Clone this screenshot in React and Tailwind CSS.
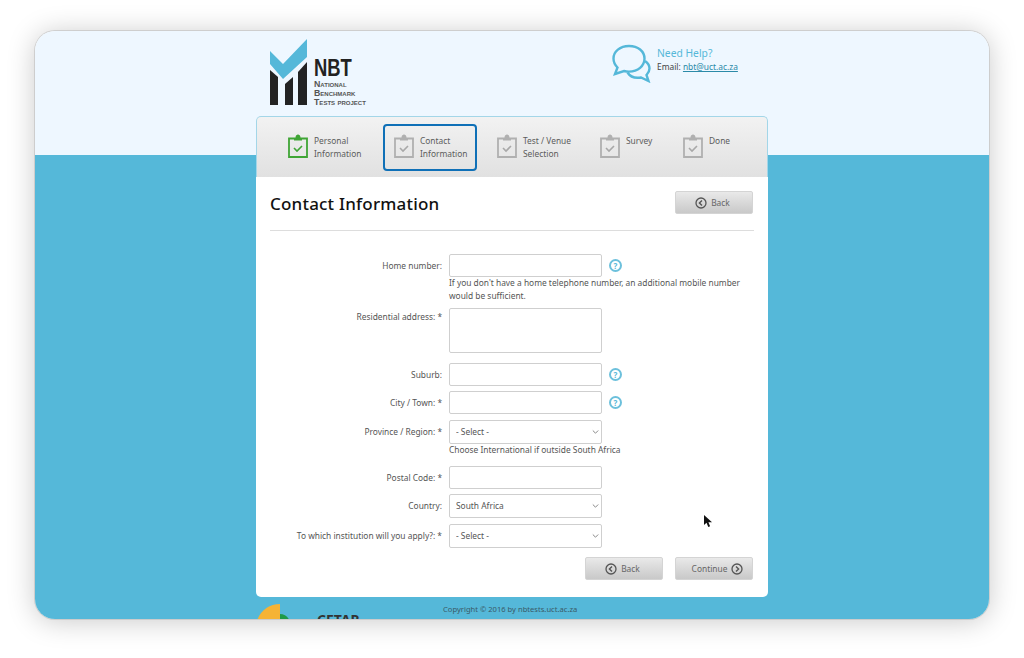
const font = "font-['Noto_Sans','Open_Sans',sans-serif]";

const Clipboard = ({ color = "#b0b0b0", checkColor = "#a8a8a8" }) => (
  <svg width="20" height="24" viewBox="0 0 20 24" fill="none">
    <path d="M6 4.500H1v18.500h18V4.500h-5" stroke={color} strokeWidth="1.800" />
    <path d="M6 6.500V3.500h1.500C7.700 1.500 8.700 .6 10 .6s2.300.9 2.500 2.900H14v3z" fill={color} />
    <path d="M6 14l3 3 5-5" stroke={checkColor} strokeWidth="1.600" />
  </svg>
);

const Step = ({ label, second, done, active, width }) => (
  <div
    className={`flex h-[47px] items-start ${width} ${
      active ? "rounded-[4px] border-2 border-[#0f70b7] pl-[9px] pt-[8px]" : "pl-[10px] pt-[10px]"
    }`}
  >
    {done ? <Clipboard color="#3fa535" checkColor="#3fa535" /> : <Clipboard />}
    <div className="ml-[6px] text-[8.4px] leading-[13px] text-[#5c5c5c]">
      <div>{label}</div>
      {second && <div>{second}</div>}
    </div>
  </div>
);

const Help = () => (
  <span className="ml-[7px] flex h-[13px] w-[13px] items-center justify-center rounded-full border-2 border-[#6cc0dc] text-[8px] font-bold leading-none text-[#55b8d9]">
    ?
  </span>
);

const Row = ({ label, children, className = "", labelClass = "pt-[5px]" }) => (
  <div className={`flex ${className}`}>
    <div className={`w-[172px] text-right text-[8.4px] leading-[13px] text-[#555] ${labelClass}`}>{label}</div>
    <div className="ml-[7px] flex-1">{children}</div>
  </div>
);

const inputCls = "block h-[23px] w-[153px] rounded-[2px] border border-[#cfcfcf] bg-white";

const Select = ({ value }) => (
  <div className="relative h-[24px] w-[153px]">
    <select
      defaultValue={value}
      className={`${font} block h-full w-full appearance-none rounded-[2px] border border-[#cfcfcf] bg-white pl-[6px] text-[8.4px] text-[#555]`}
    >
      <option>{value}</option>
    </select>
    <svg className="absolute right-[3px] top-[9px]" width="7" height="6" viewBox="0 0 7 6" fill="none">
      <path d="M.8 1.500l2.700 2.700 2.700-2.700" stroke="#888" strokeWidth="1" />
    </svg>
  </div>
);

const Arrow = ({ dir }) => (
  <svg width="12" height="12" viewBox="0 0 12 12" fill="none">
    <circle cx="6" cy="6" r="5" stroke="#555" strokeWidth="1.300" />
    <path d={dir === "left" ? "M7 3.400L4.400 6 7 8.600" : "M5 3.400L7.600 6 5 8.600"} stroke="#555" strokeWidth="1.400" />
  </svg>
);

const Button = ({ children, className = "" }) => (
  <button
    className={`flex h-[23px] w-[78px] items-center justify-center gap-[4px] rounded-[2px] border border-[#d4d4d4] bg-gradient-to-b from-[#e9e9e9] to-[#c9c9c9] pt-[1px] text-[8.4px] text-[#666] ${className}`}
  >
    {children}
  </button>
);

const Logo = () => (
  <div className="flex w-[343px] items-start">
    <svg width="44" height="67" viewBox="0 0 44 67">
      <path d="M1 12L14 25 38 0v18L14 40 1 25z" fill="#55b8d9" />
      <path d="M1 31l8 7v28H1z" fill="#232323" />
      <path d="M16 45l8-7v28h-8z" fill="#232323" />
      <path d="M29 33l9-10v43h-9z" fill="#232323" />
    </svg>
    <div className="ml-[1px] mt-[18px] font-['Liberation_Sans',sans-serif]">
      <div className="origin-left scale-x-[0.8] text-[23px] font-bold leading-[22px] text-[#222]">NBT</div>
      <div className="mt-[1px] text-[8.8px] font-bold leading-[9px] text-[#555] [font-variant:small-caps]">
        <div>National</div>
        <div>Benchmark</div>
        <div>Tests project</div>
      </div>
    </div>
  </div>
);

const Chat = () => (
  <svg width="39" height="39" viewBox="0 0 39 39" fill="none" stroke="#55b8d9" strokeWidth="2.400">
    <path d="M17 2C8 2 1.500 7.500 1.500 14.500c0 3.500 1.500 6.500 4 9L3 30l9-3c1.500.4 3.300.6 5 .6 9 0 15.500-5.600 15.500-13S26 2 17 2z" />
    <path d="M33 17c3 2 4.500 4.500 4.500 7.500 0 2.500-1 4.500-3 6.500l2 6-7.500-3.500c-6 1-11-1-13.500-5" />
  </svg>
);

export default function App() {
  return (
    <div className={`${font} h-[658px] w-[1024px] overflow-hidden bg-white pl-[35px] pt-[31px]`}>
      <div className="relative h-[588px] w-[954px] overflow-hidden rounded-[20px] bg-[linear-gradient(#eef7ff_124px,#55b8d9_124px)] shadow-[0_0_0_1px_rgba(190,190,190,0.6),0_2px_28px_rgba(0,0,0,0.22)]">
        <div className="mx-auto w-[512px]">
          <div className="flex h-[85px] pl-[13px] pt-[8px]">
            <Logo />
            <div className="mt-[5px] flex">
              <Chat />
              <div className="ml-[6px] mt-[2px]">
                <div className="text-[10.300px] leading-[14px] text-[#55b8d9]">Need Help?</div>
                <div className="text-[8.4px] leading-[13px] text-[#444]">
                  Email: <a className="text-[#2b8aa8] underline">nbt@uct.ac.za</a>
                </div>
              </div>
            </div>
          </div>

          <div className="h-[481px] rounded-[5px] bg-white">
            <div className="flex h-[61px] items-center rounded-t-[5px] border-x border-t border-[#a3d6e8] bg-gradient-to-b from-[#f2f2f2] to-[#e1e1e1] pl-[21px]">
              <Step label="Personal" second="Information" done width="w-[105px]" />
              <Step label="Contact" second="Information" active width="w-[94px]" />
              <div className="w-[10px]" />
              <Step label="Test / Venue" second="Selection" width="w-[103px]" />
              <Step label="Survey" width="w-[83px]" />
              <Step label="Done" width="w-[70px]" />
            </div>

            <div className="px-[14px]">
              <div className="flex h-[54px] items-start justify-between border-b border-[#dddddd] pt-[14px]">
                <h1 className="text-[17px] font-medium leading-[25px] tracking-[0.2px] text-[#111]">
                  Contact Information
                </h1>
                <Button className="mr-[1px] pr-[3px]">
                  <Arrow dir="left" /> Back
                </Button>
              </div>

              <div className="mt-[23px]">
                <Row label="Home number:">
                  <div className="flex items-center">
                    <input className={inputCls} />
                    <Help />
                  </div>
                  <p className="-mt-[1px] w-[300px] text-[8.4px] leading-[13px] text-[#555]">
                    If you don't have a home telephone number, an additional mobile number would be sufficient.
                  </p>
                </Row>
                <Row label="Residential address: *" className="mt-[6px]" labelClass="pt-[2px]">
                  <textarea className="block h-[45px] w-[153px] resize-none rounded-[2px] border border-[#cfcfcf] bg-white" />
                </Row>
                <Row label="Suburb:" className="mt-[10px]">
                  <div className="flex items-center">
                    <input className={inputCls} />
                    <Help />
                  </div>
                </Row>
                <Row label="City / Town: *" className="mt-[5px]">
                  <div className="flex items-center">
                    <input className={inputCls} />
                    <Help />
                  </div>
                </Row>
                <Row label="Province / Region: *" className="mt-[6px]">
                  <Select value="- Select -" />
                  <p className="-mt-[1px] text-[8.4px] leading-[13px] text-[#555]">
                    Choose International if outside South Africa
                  </p>
                </Row>
                <Row label="Postal Code: *" className="mt-[10px]">
                  <input className={inputCls} />
                </Row>
                <Row label="Country:" className="mt-[5px]">
                  <Select value="South Africa" />
                </Row>
                <Row label="To which institution will you apply?: *" className="mt-[6px]">
                  <Select value="- Select -" />
                </Row>
              </div>

              <div className="mt-[9px] flex justify-end gap-[12px] pr-[1px]">
                <Button className="pr-[3px]">
                  <Arrow dir="left" /> Back
                </Button>
                <Button className="pl-[7px]">
                  Continue <Arrow dir="right" />
                </Button>
              </div>
            </div>
          </div>

          <div className="mt-[7px] grid grid-cols-[187px_1fr]">
            <div className="flex">
              <svg width="36" height="30" viewBox="0 0 36 30">
                <path d="M24 0v24H0C0 10 11 0 24 0z" fill="#f5b335" />
                <path d="M24 10c6 0 11 5 11 14H24z" fill="#1f9a48" />
              </svg>
              <span className="ml-[25px] mt-[8px] text-[14px] font-bold leading-[16px] text-[#333]">CETAP</span>
            </div>
            <div className="text-[7.600px] leading-[11px] text-[#3a5a68]">Copyright © 2016 by nbtests.uct.ac.za</div>
          </div>
        </div>

        <svg className="absolute left-[668px] top-[483px]" width="10" height="14" viewBox="0 0 10 14">
          <path d="M1 1v10l2.500-2.200L5.300 13l1.800-.8-1.700-4H9z" fill="#111" />
        </svg>
      </div>
    </div>
  );
}
